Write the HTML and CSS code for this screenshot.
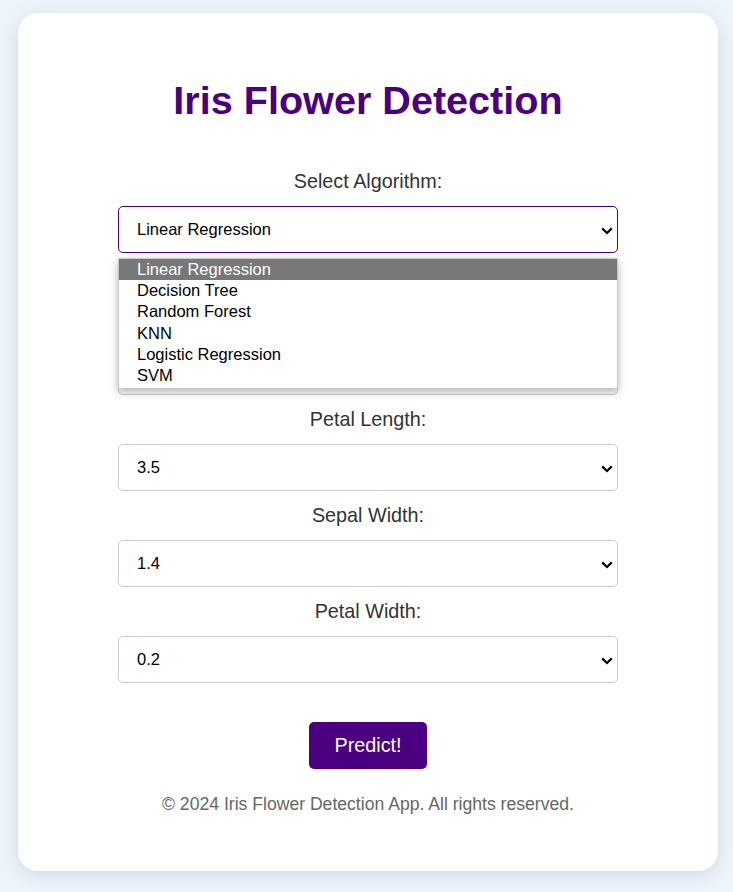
FILE: index.html
```html
<!DOCTYPE html>
<html lang="en">
<head>
<meta charset="utf-8">
<title>Iris Flower Detection</title>
<link rel="stylesheet" href="styles.css">
</head>
<body>
<div class="card">
  <h1 class="title">Iris Flower Detection</h1>
  <form class="form">
    <div class="group">
      <label class="label" for="algo">Select Algorithm:</label>
      <div class="select-wrap">
        <select id="algo" class="select select-active">
          <option>Linear Regression</option>
          <option>Decision Tree</option>
          <option>Random Forest</option>
          <option>KNN</option>
          <option>Logistic Regression</option>
          <option>SVM</option>
        </select>
        <svg class="chev" width="12" height="8" viewBox="0 0 12 8"><path d="M1.2 1.4 L6 6 L10.8 1.4" fill="none" stroke="#000" stroke-width="2.2"/></svg>
        <ul class="dropdown">
          <li class="opt opt-selected">Linear Regression</li>
          <li class="opt">Decision Tree</li>
          <li class="opt">Random Forest</li>
          <li class="opt">KNN</li>
          <li class="opt">Logistic Regression</li>
          <li class="opt">SVM</li>
        </ul>
      </div>
    </div>
    <div class="group group-first">
      <label class="label" for="sl">Sepal Length:</label>
      <div class="select-wrap">
        <select id="sl" class="select"><option>5.1</option></select>
        <svg class="chev" width="12" height="8" viewBox="0 0 12 8"><path d="M1.2 1.4 L6 6 L10.8 1.4" fill="none" stroke="#000" stroke-width="2.2"/></svg>
      </div>
    </div>
    <div class="group">
      <label class="label" for="pl">Petal Length:</label>
      <div class="select-wrap">
        <select id="pl" class="select"><option>3.5</option></select>
        <svg class="chev" width="12" height="8" viewBox="0 0 12 8"><path d="M1.2 1.4 L6 6 L10.8 1.4" fill="none" stroke="#000" stroke-width="2.2"/></svg>
      </div>
    </div>
    <div class="group">
      <label class="label" for="sw">Sepal Width:</label>
      <div class="select-wrap">
        <select id="sw" class="select"><option>1.4</option></select>
        <svg class="chev" width="12" height="8" viewBox="0 0 12 8"><path d="M1.2 1.4 L6 6 L10.8 1.4" fill="none" stroke="#000" stroke-width="2.2"/></svg>
      </div>
    </div>
    <div class="group">
      <label class="label" for="pw">Petal Width:</label>
      <div class="select-wrap">
        <select id="pw" class="select"><option>0.2</option></select>
        <svg class="chev" width="12" height="8" viewBox="0 0 12 8"><path d="M1.2 1.4 L6 6 L10.8 1.4" fill="none" stroke="#000" stroke-width="2.2"/></svg>
      </div>
    </div>
    <div class="actions">
      <button type="button" class="btn">Predict!</button>
    </div>
  </form>
  <p class="footer">© 2024 Iris Flower Detection App. All rights reserved.</p>
</div>
</body>
</html>
```

FILE: styles.css
```css
html, body {
  margin: 0;
  padding: 0;
}
body {
  background: #edf4fc;
  font-family: "Liberation Sans", Arial, sans-serif;
  color: #333;
  height: 892px;
  overflow: hidden;
}
.card {
  box-sizing: border-box;
  width: 700px;
  height: 858px;
  margin: 13px 0 0 18px;
  padding: 64px 100px 57px;
  background: #fff;
  border-radius: 20px;
  box-shadow: 0 4px 18px rgba(60, 80, 110, 0.16);
}
.title {
  margin: 0;
  font-size: 39.6px;
  line-height: 46px;
  font-weight: bold;
  color: #4b0082;
  text-align: center;
}
.form {
  display: flex;
  flex-direction: column;
  margin-top: 47px;
}
.group {
  display: flex;
  flex-direction: column;
  align-items: center;
  gap: 12.5px;
}
.group + .group {
  margin-top: 13.5px;
}
.group.group-first {
  margin-top: 59.5px;
}
.label {
  font-size: 19.8px;
  line-height: 23px;
  color: #333;
}
.select-wrap {
  position: relative;
  width: 500px;
  height: 47px;
}
.select {
  display: block;
  box-sizing: border-box;
  width: 500px;
  height: 47px;
  padding: 0 30px 0 18px;
  font-family: "Liberation Sans", Arial, sans-serif;
  font-size: 16.5px;
  color: #000;
  background: #fff;
  border: 1px solid #ccc;
  border-radius: 5px;
  -webkit-appearance: none;
  appearance: none;
}
.select-active {
  border-color: #4b0082;
}
.chev {
  position: absolute;
  right: 5px;
  top: 21px;
  pointer-events: none;
}
.dropdown {
  position: absolute;
  left: 0;
  top: 52px;
  width: 500px;
  box-sizing: border-box;
  margin: 0;
  padding: 0 0 1px;
  list-style: none;
  background: #fff;
  border: 1px solid #c8c8c8;
  box-shadow: 0 3px 8px rgba(0, 0, 0, 0.3);
  z-index: 10;
}
.opt {
  height: 21.4px;
  line-height: 21.4px;
  padding-left: 18px;
  font-size: 16.5px;
  color: #000;
}
.opt-selected {
  background: #787878;
  color: #fff;
}
.actions {
  display: flex;
  justify-content: center;
  margin-top: 39px;
}
.btn {
  height: 47px;
  padding: 0 25px;
  font-family: "Liberation Sans", Arial, sans-serif;
  font-size: 19.8px;
  color: #fff;
  background: #4b0082;
  border: none;
  border-radius: 5px;
}
.footer {
  margin: 25px 0 0;
  font-size: 17.6px;
  line-height: 20px;
  text-align: center;
  color: #666;
}
```
